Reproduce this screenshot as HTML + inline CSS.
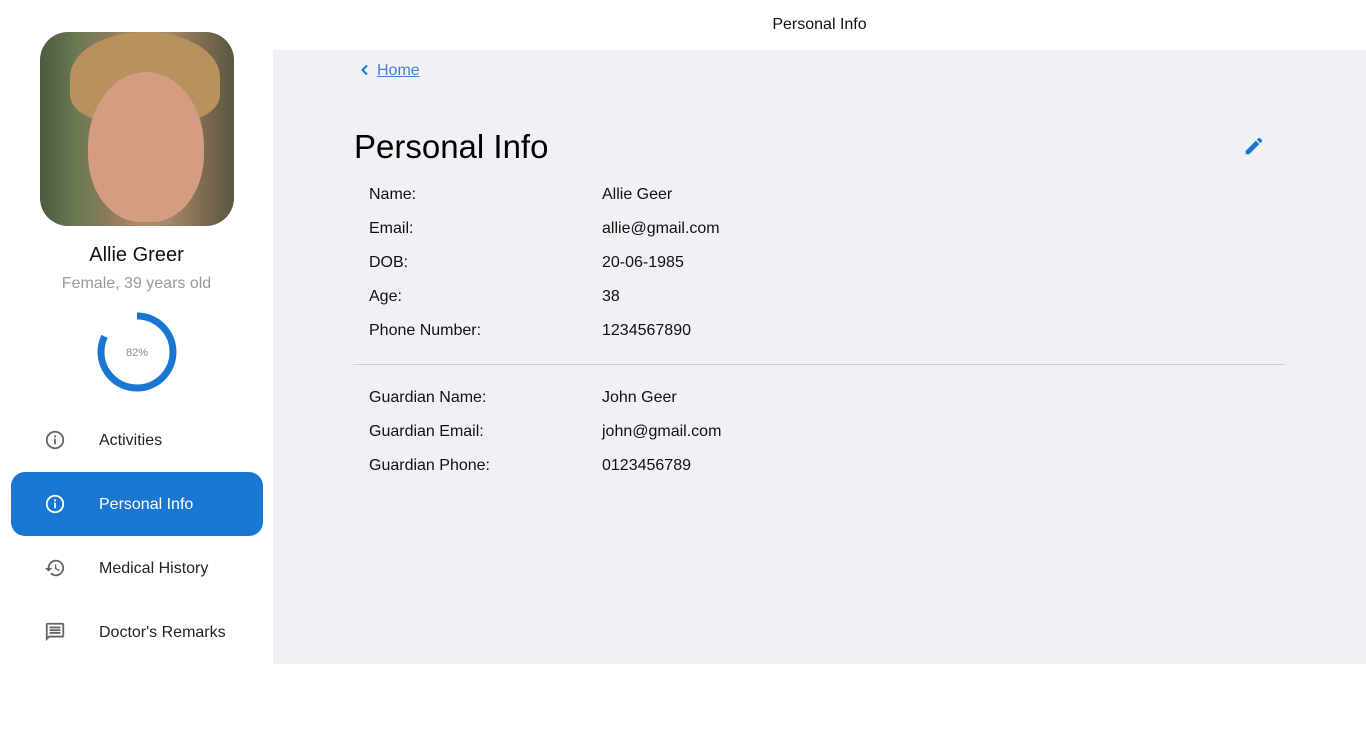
<!DOCTYPE html>
<html><head><style>
body{margin:0;width:1366px;height:753px;background:#fff;font-family:"Liberation Sans",sans-serif;position:relative;overflow:hidden}
.top{position:absolute;top:16px;left:273px;width:1093px;text-align:center;font-size:16px;color:#111}
.side{position:absolute;left:0;top:0;width:273px}
.photo{position:absolute;left:40px;top:32px;width:194px;height:194px;border-radius:28px;overflow:hidden;background:linear-gradient(90deg,#4d5a3e 0%,#6d7a55 20%,#8a7a5a 35%,#b08866 50%,#a88a68 65%,#7a6a50 85%,#5b5740 100%)}
.face{position:absolute;left:48px;top:40px;width:116px;height:150px;border-radius:50% 50% 45% 45%;background:#d49c80}
.hair{position:absolute;left:30px;top:0px;width:150px;height:90px;border-radius:50% 50% 30% 30%;background:#b8925e}
.name{position:absolute;top:244px;width:273px;text-align:center;font-size:20px;color:#111}
.sub{position:absolute;top:275px;width:273px;text-align:center;font-size:16px;color:#999}
.ring{position:absolute;left:97px;top:312px}
.item{position:absolute;left:11px;width:252px;height:64px;border-radius:14px;font-size:16px;color:#222}
.item span{position:absolute;left:88px;top:24px}
.item svg{position:absolute;left:33px;top:21px}
.active{background:#1976d2;color:#fff}
.main{position:absolute;left:273px;top:50px;width:1093px;height:614px;background:#f0f1f5}
.home{position:absolute;left:104px;top:12px;font-size:16px;color:#4a7fd0;text-decoration:underline}
h1{position:absolute;left:81px;top:78px;margin:0;font-weight:normal;font-size:33px;color:#000}
.row{position:absolute;left:96px;font-size:16px;color:#111}
.val{position:absolute;left:329px;font-size:16px;color:#111}
.hr{position:absolute;left:80px;top:314px;width:932px;height:1px;background:#d0d0d0}
</style></head><body>
<div class="top">Personal Info</div>
<div class="side">
<div class="photo"><div class="hair"></div><div class="face"></div></div>
<div class="name">Allie Greer</div>
<div class="sub">Female, 39 years old</div>
<svg class="ring" width="80" height="80" viewBox="0 0 80 80"><circle cx="40" cy="40" r="36" fill="none" stroke="#1976d2" stroke-width="7" stroke-dasharray="185.5 226.2" transform="rotate(-90 40 40)"/><text x="40" y="44" text-anchor="middle" font-size="11" fill="#888" font-family="Liberation Sans">82%</text></svg>
<div class="item" style="top:408px"><svg width="22" height="22" viewBox="0 0 24 24"><circle cx="12" cy="12" r="9" fill="none" stroke="#666" stroke-width="2"/><rect x="11" y="10.5" width="2" height="6" fill="#666"/><rect x="11" y="7" width="2" height="2" fill="#666"/></svg><span>Activities</span></div>
<div class="item active" style="top:472px"><svg width="22" height="22" viewBox="0 0 24 24"><circle cx="12" cy="12" r="9" fill="none" stroke="#fff" stroke-width="2"/><rect x="11" y="10.5" width="2" height="6" fill="#fff"/><rect x="11" y="7" width="2" height="2" fill="#fff"/></svg><span>Personal Info</span></div>
<div class="item" style="top:536px"><svg width="22" height="22" viewBox="0 0 24 24"><path d="M13 3a9 9 0 0 0-9 9H1l4 4 4-4H6a7 7 0 1 1 2.05 4.95l-1.42 1.42A9 9 0 1 0 13 3zm-1 5v5l4.25 2.52.77-1.28-3.52-2.09V8z" fill="#666"/></svg><span>Medical History</span></div>
<div class="item" style="top:600px"><svg width="22" height="22" viewBox="0 0 24 24"><path d="M20 2H4a2 2 0 0 0-2 2v18l4-4h14a2 2 0 0 0 2-2V4a2 2 0 0 0-2-2zm0 14H5.2L4 17.2V4h16zM6 12h12v2H6zm0-3h12v2H6zm0-3h12v2H6z" fill="#666"/></svg><span>Doctor's Remarks</span></div>
</div>
<div class="main">
<svg style="position:absolute;left:86px;top:14px" width="12" height="12" viewBox="0 0 12 12"><path d="M8 1.5L3.5 6 8 10.5" fill="none" stroke="#1976d2" stroke-width="2"/></svg>
<div class="home">Home</div>
<h1>Personal Info</h1>
<svg style="position:absolute;left:970px;top:85px" width="22" height="22" viewBox="0 0 24 24"><path d="M3 17.25V21h3.75L17.81 9.94l-3.75-3.75zM20.71 7.04a1 1 0 0 0 0-1.41l-2.34-2.34a1 1 0 0 0-1.41 0l-1.83 1.83 3.75 3.75z" fill="#1976d2"/></svg>
<div class="row" style="top:136px">Name:</div><div class="val" style="top:136px">Allie Geer</div>
<div class="row" style="top:170px">Email:</div><div class="val" style="top:170px">allie@gmail.com</div>
<div class="row" style="top:204px">DOB:</div><div class="val" style="top:204px">20-06-1985</div>
<div class="row" style="top:238px">Age:</div><div class="val" style="top:238px">38</div>
<div class="row" style="top:272px">Phone Number:</div><div class="val" style="top:272px">1234567890</div>
<div class="hr"></div>
<div class="row" style="top:339px">Guardian Name:</div><div class="val" style="top:339px">John Geer</div>
<div class="row" style="top:373px">Guardian Email:</div><div class="val" style="top:373px">john@gmail.com</div>
<div class="row" style="top:407px">Guardian Phone:</div><div class="val" style="top:407px">0123456789</div>
</div>
</body></html>
